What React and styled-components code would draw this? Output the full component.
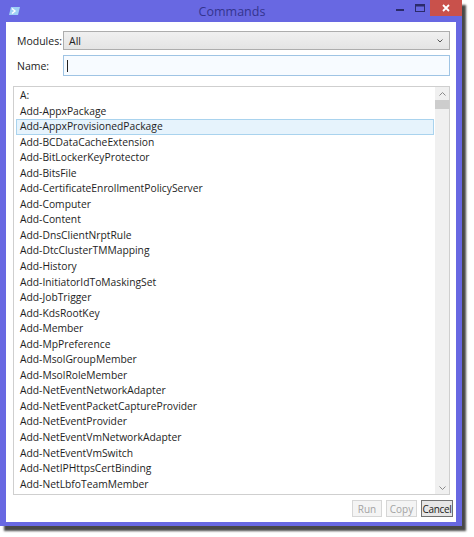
import React from "react";
import styled, { createGlobalStyle } from "styled-components";

const Global = createGlobalStyle`
  html, body { margin: 0; padding: 0; background: #ffffff; }
  body { font-family: "Open Sans", "Noto Sans", "Liberation Sans", sans-serif; }
`;

const Page = styled.div`
  width: 474px;
  height: 537px;
  background: #fff;
`;

const Window = styled.div`
  width: 462px;
  height: 526px;
  background: #6868e2;
  box-shadow: 4px 5px 2px rgba(40, 40, 40, 0.85);
  display: flex;
  flex-direction: column;
  box-sizing: border-box;
`;

const TitleBar = styled.div`
  height: 22px;
  display: flex;
  align-items: flex-start;
  position: relative;
`;

const AppIcon = styled.div`
  width: 24px;
  height: 22px;
  display: flex;
  align-items: center;
  justify-content: center;
  padding-left: 2px;
`;

const Title = styled.div`
  flex: 1;
  text-align: center;
  font-size: 12.5px;
  line-height: 24px;
  color: #34348f;
  padding-left: 48px;
`;

const Caption = styled.div`
  display: flex;
  align-items: flex-start;
  height: 22px;
`;

const CapBtn = styled.div`
  width: ${(p) => p.$w}px;
  height: 16px;
  display: flex;
  align-items: center;
  justify-content: center;
  background: ${(p) => (p.$close ? "#c9514b" : "transparent")};
`;

const Content = styled.div`
  flex: 1;
  margin: 0 6px 5px 6px;
  background: #ffffff;
  padding: 9px 6px 5px 7px;
  display: flex;
  flex-direction: column;
  box-sizing: border-box;
`;

const FormRow = styled.div`
  display: grid;
  grid-template-columns: 50px 1fr;
  align-items: center;
  margin-bottom: ${(p) => p.$mb || 0}px;
`;

const Label = styled.div`
  font-size: 10.5px;
  color: #222;
  padding-left: 4px;
`;

const Select = styled.div`
  height: 19px;
  box-sizing: border-box;
  border: 1px solid #adadad;
  background: linear-gradient(#f0f0f0, #e4e4e4);
  display: flex;
  align-items: center;
  justify-content: space-between;
  padding: 0 6px 0 5px;
  font-size: 10.5px;
  color: #222;
`;

const Input = styled.div`
  height: 21px;
  box-sizing: border-box;
  border: 1px solid #9fc4e4;
  background: #f7fbff;
  display: flex;
  align-items: center;
  padding-left: 3px;
`;

const Caret = styled.div`
  width: 1px;
  height: 12px;
  background: #222;
`;

const List = styled.div`
  height: 409px;
  box-sizing: border-box;
  border: 1px solid #cfcfcf;
  display: flex;
  overflow: hidden;
`;

const Items = styled.div`
  flex: 1;
  padding: 1px 0 0 2px;
  overflow: hidden;
`;

const Item = styled.div`
  height: 15.56px;
  box-sizing: border-box;
  line-height: 13px;
  font-size: 10.3px;
  color: #1e1e1e;
  padding-left: 3px;
  white-space: nowrap;
  border: 1px solid ${(p) => (p.$sel ? "#a9d3ee" : "transparent")};
  background: ${(p) => (p.$sel ? "#e6f3fc" : "transparent")};
  margin-right: 1px;
`;

const ScrollBar = styled.div`
  width: 14px;
  background: #f0f0f0;
  display: flex;
  flex-direction: column;
  align-items: center;
`;

const Arrow = styled.div`
  height: 13px;
  display: flex;
  align-items: center;
  justify-content: center;
`;

const Thumb = styled.div`
  width: 14px;
  height: 9px;
  background: #cdcdcd;
`;

const Track = styled.div`
  flex: 1;
`;

const Buttons = styled.div`
  display: flex;
  justify-content: flex-end;
  gap: 4px;
  margin-top: 5px;
  margin-right: -3px;
`;

const Button = styled.div`
  height: 17px;
  width: ${(p) => p.$w}px;
  box-sizing: border-box;
  display: flex;
  align-items: center;
  justify-content: center;
  font-size: 10px;
  letter-spacing: ${(p) => (p.$tight ? "-0.3px" : "0")};
  color: ${(p) => (p.$disabled ? "#a3a3a3" : "#1a1a1a")};
  border: 1px solid ${(p) => (p.$disabled ? "#d6d6d6" : "#707070")};
  background: ${(p) => (p.$disabled ? "#f4f4f4" : "#e6e6e6")};
  overflow: hidden;
  white-space: nowrap;
`;

const items = [
  "A:",
  "Add-AppxPackage",
  "Add-AppxProvisionedPackage",
  "Add-BCDataCacheExtension",
  "Add-BitLockerKeyProtector",
  "Add-BitsFile",
  "Add-CertificateEnrollmentPolicyServer",
  "Add-Computer",
  "Add-Content",
  "Add-DnsClientNrptRule",
  "Add-DtcClusterTMMapping",
  "Add-History",
  "Add-InitiatorIdToMaskingSet",
  "Add-JobTrigger",
  "Add-KdsRootKey",
  "Add-Member",
  "Add-MpPreference",
  "Add-MsolGroupMember",
  "Add-MsolRoleMember",
  "Add-NetEventNetworkAdapter",
  "Add-NetEventPacketCaptureProvider",
  "Add-NetEventProvider",
  "Add-NetEventVmNetworkAdapter",
  "Add-NetEventVmSwitch",
  "Add-NetIPHttpsCertBinding",
  "Add-NetLbfoTeamMember",
];

export default function App() {
  return (
    <Page>
      <Global />
      <Window>
        <TitleBar>
          <AppIcon>
            <svg width="11" height="8" viewBox="0 0 11 8">
              <path d="M2 0 H11 L9 8 H0 Z" fill="#9fd0f5" />
              <path d="M3 1.5 L6 4 L3 6.5" stroke="#ffffff" strokeWidth="1.4" fill="none" />
            </svg>
          </AppIcon>
          <Title>Commands</Title>
          <Caption>
            <CapBtn $w={20}>
              <svg width="9" height="8" viewBox="0 0 9 8">
                <rect x="0" y="5" width="8" height="2" fill="#2b2b6a" />
              </svg>
            </CapBtn>
            <CapBtn $w={20}>
              <svg width="10" height="9" viewBox="0 0 10 9">
                <rect x="0.5" y="0.5" width="9" height="7" fill="none" stroke="#2b2b6a" />
                <rect x="0.5" y="0.5" width="9" height="2" fill="#2b2b6a" />
              </svg>
            </CapBtn>
            <CapBtn $w={32} $close>
              <svg width="8" height="8" viewBox="0 0 8 8">
                <path d="M1 1 L7 7 M7 1 L1 7" stroke="#ffffff" strokeWidth="1.8" />
              </svg>
            </CapBtn>
          </Caption>
        </TitleBar>
        <Content>
          <FormRow $mb={5}>
            <Label>Modules:</Label>
            <Select>
              <span>All</span>
              <svg width="6" height="4" viewBox="0 0 6 4">
                <path d="M0.5 0.5 L3 3 L5.5 0.5" stroke="#555" strokeWidth="1" fill="none" />
              </svg>
            </Select>
          </FormRow>
          <FormRow $mb={10}>
            <Label>Name:</Label>
            <Input>
              <Caret />
            </Input>
          </FormRow>
          <List>
            <Items>
              {items.map((t, i) => (
                <Item key={t} $sel={i === 2}>
                  {t}
                </Item>
              ))}
            </Items>
            <ScrollBar>
              <Arrow>
                <svg width="7" height="4" viewBox="0 0 7 4">
                  <path d="M0.5 3.5 L3.5 0.5 L6.5 3.5" stroke="#8a8a8a" fill="none" />
                </svg>
              </Arrow>
              <Thumb />
              <Track />
              <Arrow>
                <svg width="7" height="4" viewBox="0 0 7 4">
                  <path d="M0.5 0.5 L3.5 3.5 L6.5 0.5" stroke="#8a8a8a" fill="none" />
                </svg>
              </Arrow>
            </ScrollBar>
          </List>
          <Buttons>
            <Button $disabled $w={30}>Run</Button>
            <Button $disabled $w={31}>Copy</Button>
            <Button $w={32} $tight>Cancel</Button>
          </Buttons>
        </Content>
      </Window>
    </Page>
  );
}
